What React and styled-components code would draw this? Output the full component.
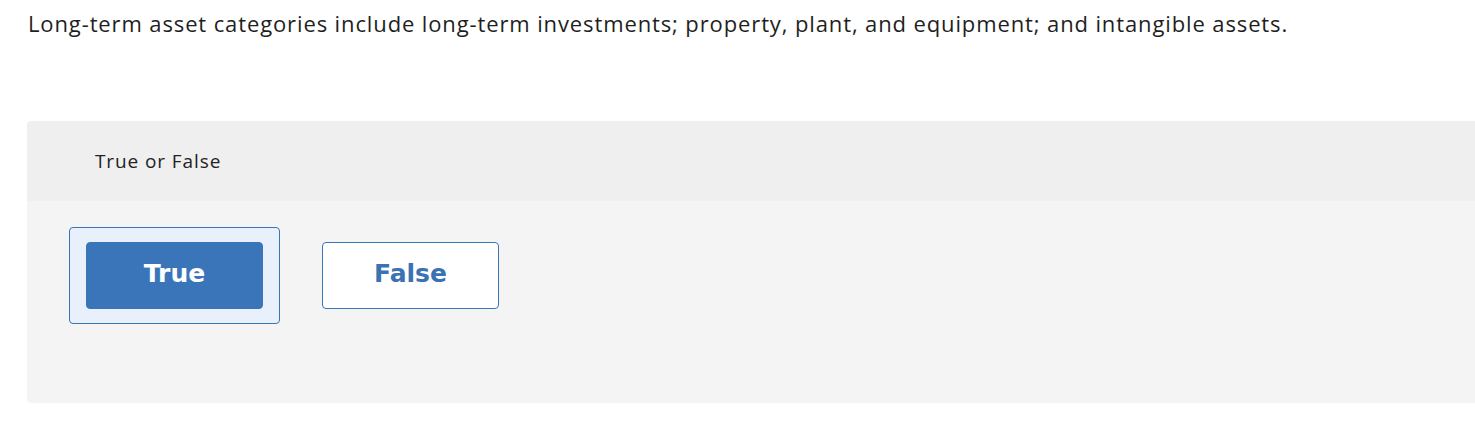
import styled, { createGlobalStyle } from 'styled-components'

const GlobalStyle = createGlobalStyle`
  body {
    margin: 0;
    background: #ffffff;
    font-family: 'Open Sans', 'Liberation Sans', sans-serif;
    color: #222222;
  }
`

const Page = styled.div`
  padding: 8px 0 23px 27px;
  overflow: hidden;
`

const Prompt = styled.p`
  margin: 0 0 0 1px;
  font-size: 22px;
  line-height: 30px;
  letter-spacing: 0.88px;
  color: #1f1f1f;
  white-space: nowrap;
`

const Panel = styled.section`
  margin-top: 83px;
  margin-right: -20px;
  border-radius: 4px 0 0 4px;
  overflow: hidden;
`

const PanelHeader = styled.div`
  height: 80px;
  display: flex;
  align-items: center;
  padding-left: 68px;
  background: #efefef;
  font-size: 19px;
  letter-spacing: 0.9px;
  color: #222222;
`

const PanelBody = styled.div`
  height: 202px;
  box-sizing: border-box;
  padding: 26px 42px;
  background: #f4f4f4;
  display: flex;
  align-items: flex-start;
  gap: 42px;
`

const Choice = styled.div`
  padding: 14px 16px;
  border: 1px solid ${p => (p.$selected ? '#3b73b3' : 'transparent')};
  border-radius: 4px;
  background: ${p => (p.$selected ? '#e8f1fb' : 'transparent')};
  margin: ${p => (p.$selected ? '0' : '0 0 0 -17px')};
`

const ChoiceButton = styled.button`
  width: 177px;
  height: 67px;
  box-sizing: border-box;
  padding: 0 0 4px;
  border-radius: 4px;
  border: 1px solid #3a75b9;
  background: ${p => (p.$selected ? '#3a75b9' : '#ffffff')};
  color: ${p => (p.$selected ? '#ffffff' : '#3a72b3')};
  font-family: 'DejaVu Sans', 'Open Sans', sans-serif;
  font-weight: 700;
  font-size: 25px;
  cursor: pointer;
`

export default function App() {
  return (
    <Page>
      <GlobalStyle />
      <Prompt>
        Long-term asset categories include long-term investments; property, plant, and equipment; and intangible assets.
      </Prompt>
      <Panel>
        <PanelHeader>True or False</PanelHeader>
        <PanelBody>
          <Choice $selected>
            <ChoiceButton $selected>True</ChoiceButton>
          </Choice>
          <Choice>
            <ChoiceButton>False</ChoiceButton>
          </Choice>
        </PanelBody>
      </Panel>
    </Page>
  )
}
